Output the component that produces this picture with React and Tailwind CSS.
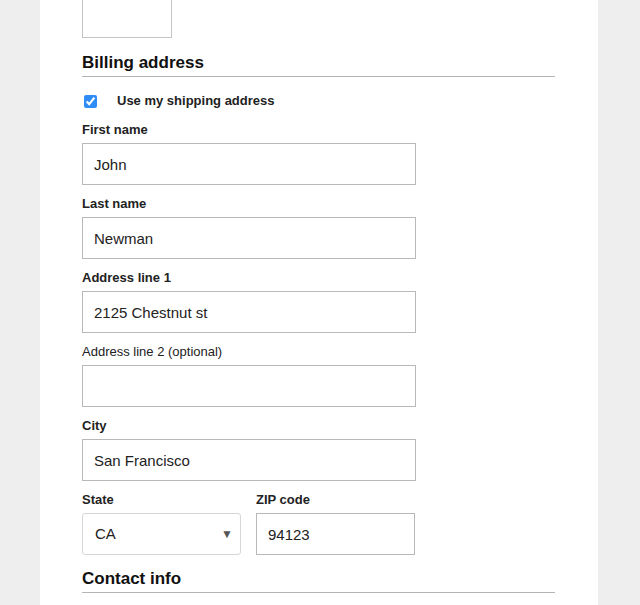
import React, { useState } from 'react';

const Field = ({ label, optional, value, width = 'w-[334px]' }) => (
  <div className="mb-[9px]">
    <div className={`h-[19px] leading-[19px] text-[13px] text-[#222] ${optional ? 'font-normal' : 'font-bold'} mb-[4px]`}>
      {label}
    </div>
    <input
      type="text"
      defaultValue={value}
      className={`${width} h-[42px] border border-[#b8b8b8] px-[11px] text-[15px] text-[#222] bg-white outline-none`}
    />
  </div>
);

export default function App() {
  const [useShipping, setUseShipping] = useState(true);

  return (
    <div className="h-[605px] overflow-hidden bg-[#eeeeee] font-['Liberation_Sans',Arial,sans-serif]">
      <div className="flow-root ml-[40px] w-[558px] h-full overflow-hidden bg-white pl-[42px]">
        {/* card box from the section above */}
        <div className="w-[90px] h-[90px] -mt-[52px] border border-[#c4c4c4]" />

        <div className="mt-[15px] w-[473px] border-b border-[#b5b5b5] pb-[3px]">
          <h2 className="text-[17px] leading-[20px] font-bold text-[#111]">Billing address</h2>
        </div>

        <label className="flex items-center h-[24px] mt-[12px] mb-[7px] cursor-pointer">
          <input
            type="checkbox"
            checked={useShipping}
            onChange={() => setUseShipping(!useShipping)}
            className="ml-[2px] w-[13px] h-[13px] accent-[#2f8cf5]"
          />
          <span className="ml-[20px] text-[13px] font-bold text-[#222]">Use my shipping address</span>
        </label>

        <Field label="First name" value="John" />
        <Field label="Last name" value="Newman" />
        <Field label="Address line 1" value="2125 Chestnut st" />
        <Field label="Address line 2 (optional)" optional value="" />
        <Field label="City" value="San Francisco" />

        <div className="flex gap-[15px]">
          <div className="mb-[9px]">
            <div className="h-[19px] leading-[19px] text-[13px] font-bold text-[#222] mb-[4px]">State</div>
            <div className="relative w-[159px] h-[42px] border border-[#d6d6d6] rounded-[3px] bg-white flex items-center pl-[12px] text-[15px] text-[#222]">
              CA
              <span className="absolute right-[7px] top-[13px] text-[12px] leading-[14px] text-[#555]">▼</span>
            </div>
          </div>
          <Field label="ZIP code" value="94123" width="w-[159px]" />
        </div>

        <div className="mt-[5px] w-[473px] border-b border-[#b5b5b5] pb-[3px]">
          <h2 className="text-[17px] leading-[20px] font-bold text-[#111]">Contact info</h2>
        </div>
      </div>
    </div>
  );
}
